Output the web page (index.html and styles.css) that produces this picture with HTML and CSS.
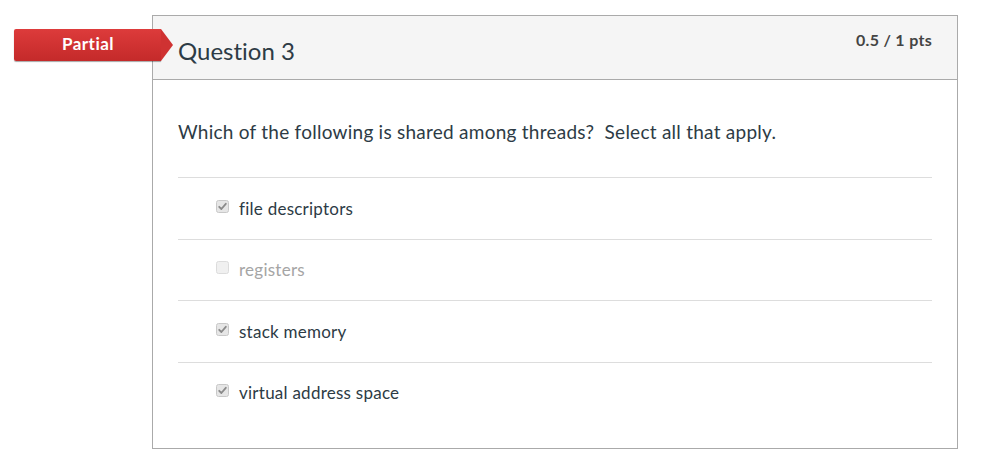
FILE: index.html
```html
<!DOCTYPE html>
<html lang="en">
<head>
<meta charset="UTF-8">
<meta name="viewport" content="width=device-width, initial-scale=1.0">
<title>Question 3</title>
<link rel="stylesheet" href="styles.css">
</head>
<body>

<div class="quiz">
  <div class="question-holder">
    <div class="answer-arrow">Partial</div>

    <div class="question">
      <div class="question-header">
        <h2 class="question-name">Question 3</h2>
        <span class="question-points">0.5 / 1 pts</span>
      </div>

      <div class="question-body">
        <p class="question-text">Which of the following is shared among threads?&nbsp; Select all that apply.</p>

        <div class="answers">
          <label class="answer">
            <svg class="check" viewBox="0 0 13 13"><rect x="0.5" y="0.5" width="12" height="12" rx="2" class="box"/><path d="M3.2 6.8 L5.4 9 L9.8 3.8" class="tick"/></svg>
            <span class="answer-text">file descriptors</span>
          </label>
          <label class="answer answer-off">
            <svg class="check" viewBox="0 0 13 13"><rect x="0.5" y="0.5" width="12" height="12" rx="2" class="box"/></svg>
            <span class="answer-text">registers</span>
          </label>
          <label class="answer">
            <svg class="check" viewBox="0 0 13 13"><rect x="0.5" y="0.5" width="12" height="12" rx="2" class="box"/><path d="M3.2 6.8 L5.4 9 L9.8 3.8" class="tick"/></svg>
            <span class="answer-text">stack memory</span>
          </label>
          <label class="answer">
            <svg class="check" viewBox="0 0 13 13"><rect x="0.5" y="0.5" width="12" height="12" rx="2" class="box"/><path d="M3.2 6.8 L5.4 9 L9.8 3.8" class="tick"/></svg>
            <span class="answer-text">virtual address space</span>
          </label>
        </div>
      </div>
    </div>
  </div>
</div>

</body>
</html>
```

FILE: styles.css
```css
body {
  margin: 0;
  background-color: #fff;
  font-family: Lato, "Open Sans", sans-serif;
  color: #2d3b45;
  font-variant-ligatures: no-common-ligatures;
}

.quiz {
  padding: 15px 0 0 152px;
}

.question-holder {
  position: relative;
}

.answer-arrow {
  position: absolute;
  top: 14px;
  left: -138px;
  width: 147px;
  height: 32px;
  line-height: 30px;
  padding-left: 1px;
  box-sizing: border-box;
  text-align: center;
  color: #fff;
  font-weight: bold;
  font-size: 17px;
  letter-spacing: 0.5px;
  background: linear-gradient(#dd3b3b, #c42a2a);
  border-radius: 2px 0 0 2px;
  box-shadow: 0 1px 1px rgba(0, 0, 0, 0.35);
  z-index: 2;
}

.answer-arrow::after {
  content: "";
  position: absolute;
  top: 0;
  right: -12px;
  border-style: solid;
  border-width: 16px 0 16px 12px;
  border-color: transparent transparent transparent #cf3232;
}

.question {
  width: 806px;
  height: 434px;
  box-sizing: border-box;
  border: 1px solid #aaa;
}

.question-header {
  display: flex;
  justify-content: space-between;
  align-items: flex-start;
  height: 64px;
  box-sizing: border-box;
  padding: 0 25px;
  background-color: #f5f5f5;
  border-bottom: 1px solid #aaa;
}

.question-name {
  margin: 20px 0 0;
  font-size: 24px;
  font-weight: normal;
  line-height: 30px;
}

.question-points {
  margin-top: 14px;
  font-size: 16px;
  font-weight: bold;
  line-height: 20px;
  letter-spacing: 0.3px;
  color: #444;
}

.question-body {
  padding: 0 25px;
}

.question-text {
  margin: 0;
  padding: 40px 0 0;
  height: 97px;
  box-sizing: border-box;
  font-size: 19px;
  letter-spacing: 0.25px;
  line-height: 24px;
}

.answer {
  display: flex;
  align-items: center;
  height: 61.5px;
  padding-left: 38px;
  border-top: 1px solid #ddd;
  box-sizing: border-box;
  font-size: 17px;
  letter-spacing: 0.25px;
}

.check {
  width: 13px;
  height: 13px;
  margin-right: 10px;
  margin-top: -4px;
}

.box {
  fill: #e6e6e6;
  stroke: #c8c8c8;
  stroke-width: 1;
}

.tick {
  fill: none;
  stroke: #8a8a8a;
  stroke-width: 1.8;
  stroke-linecap: round;
  stroke-linejoin: round;
}

.answer-off .answer-text {
  color: #a5a5a5;
}

.answer-off .box {
  fill: #f0f0f0;
  stroke: #dcdcdc;
}
```
